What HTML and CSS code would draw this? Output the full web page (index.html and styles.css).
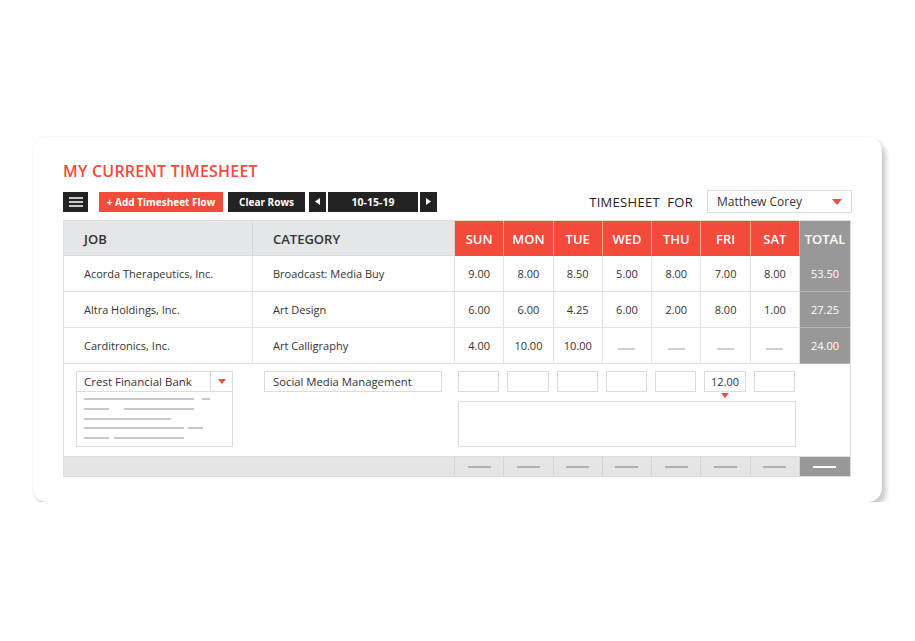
FILE: index.html
```html
<!DOCTYPE html>
<html>
<head>
<meta charset="utf-8">
<link rel="stylesheet" href="styles.css">
</head>
<body>
<div class="card">
  <h1 class="title">MY CURRENT TIMESHEET</h1>
  <div class="toolbar">
    <div class="tools">
      <div class="btn dark menu">
        <svg width="14" height="10" viewBox="0 0 14 10"><path d="M0 1h14M0 5h14M0 9h14" stroke="#fff" stroke-width="1.6"/></svg>
      </div>
      <div class="btn red add">+ Add Timesheet Flow</div>
      <div class="btn dark clear">Clear Rows</div>
      <div class="datepick">
        <div class="btn dark arrow"><svg width="5" height="7" viewBox="0 0 5 7"><path d="M5 0v7L0 3.5z" fill="#fff"/></svg></div>
        <div class="btn dark date">10-15-19</div>
        <div class="btn dark arrow"><svg width="5" height="7" viewBox="0 0 5 7"><path d="M0 0v7l5-3.5z" fill="#fff"/></svg></div>
      </div>
    </div>
    <div class="for">
      <span class="for-label">TIMESHEET&nbsp; FOR</span>
      <div class="select"><span>Matthew Corey</span><span class="tri"></span></div>
    </div>
  </div>

  <div class="sheet">
    <div class="row head">
      <div class="cell hl">JOB</div>
      <div class="cell hl">CATEGORY</div>
      <div class="cell hd">SUN</div>
      <div class="cell hd">MON</div>
      <div class="cell hd">TUE</div>
      <div class="cell hd">WED</div>
      <div class="cell hd">THU</div>
      <div class="cell hd">FRI</div>
      <div class="cell hd">SAT</div>
      <div class="cell ht">TOTAL</div>
    </div>
    <div class="row data">
      <div class="cell txt">Acorda Therapeutics, Inc.</div>
      <div class="cell txt">Broadcast: Media Buy</div>
      <div class="cell num">9.00</div>
      <div class="cell num">8.00</div>
      <div class="cell num">8.50</div>
      <div class="cell num">5.00</div>
      <div class="cell num">8.00</div>
      <div class="cell num">7.00</div>
      <div class="cell num">8.00</div>
      <div class="cell tot">53.50</div>
    </div>
    <div class="row data">
      <div class="cell txt">Altra Holdings, Inc.</div>
      <div class="cell txt">Art Design</div>
      <div class="cell num">6.00</div>
      <div class="cell num">6.00</div>
      <div class="cell num">4.25</div>
      <div class="cell num">6.00</div>
      <div class="cell num">2.00</div>
      <div class="cell num">8.00</div>
      <div class="cell num">1.00</div>
      <div class="cell tot">27.25</div>
    </div>
    <div class="row data">
      <div class="cell txt">Carditronics, Inc.</div>
      <div class="cell txt">Art Calligraphy</div>
      <div class="cell num">4.00</div>
      <div class="cell num">10.00</div>
      <div class="cell num">10.00</div>
      <div class="cell num"><span class="dash"></span></div>
      <div class="cell num"><span class="dash"></span></div>
      <div class="cell num"><span class="dash"></span></div>
      <div class="cell num"><span class="dash"></span></div>
      <div class="cell tot">24.00</div>
    </div>
    <div class="row entry">
      <div class="ecell job">
        <div class="combo"><span class="combo-text">Crest Financial Bank</span><span class="combo-btn"><span class="tri"></span></span></div>
        <div class="list">
          <svg width="156" height="54" viewBox="0 0 156 54">
            <g stroke="#c8c8c8" stroke-width="2">
              <path d="M7 7h110M125 7h8"/>
              <path d="M7 17h25M47 17h70"/>
              <path d="M7 27h87"/>
              <path d="M7 36h100M111 36h15"/>
              <path d="M7 46h25M37 46h70"/>
            </g>
          </svg>
        </div>
      </div>
      <div class="ecell cat">
        <div class="field">Social Media Management</div>
      </div>
      <div class="ecell days">
        <div class="box"></div>
        <div class="box"></div>
        <div class="box"></div>
        <div class="box"></div>
        <div class="box"></div>
        <div class="box filled">12.00<span class="pointer"></span></div>
        <div class="box"></div>
        <div class="note"></div>
      </div>
      <div class="ecell"></div>
    </div>
    <div class="row foot">
      <div class="fcell wide"></div>
      <div class="fcell"><span class="fdash"></span></div>
      <div class="fcell"><span class="fdash"></span></div>
      <div class="fcell"><span class="fdash"></span></div>
      <div class="fcell"><span class="fdash"></span></div>
      <div class="fcell"><span class="fdash"></span></div>
      <div class="fcell"><span class="fdash"></span></div>
      <div class="fcell"><span class="fdash"></span></div>
      <div class="fcell ftot"><span class="fdash"></span></div>
    </div>
  </div>
</div>
</body>
</html>
```
FILE: styles.css
```css
* { box-sizing: border-box; }
html, body { margin: 0; padding: 0; background: #fff; }
body {
  font-family: "Open Sans", "Noto Sans", "Liberation Sans", sans-serif;
  color: #333;
  padding: 137px 0 0 33px;
}
.card {
  width: 849px;
  height: 365px;
  background: #fff;
  border-radius: 14px;
  box-shadow: 0 0 3px rgba(0,0,0,0.08), 4px 5px 5px rgba(0,0,0,0.2);
  padding: 24px 30px 0 30px;
  display: flex;
  flex-direction: column;
}
.title {
  margin: 0 0 9px 0;
  font-size: 16px;
  line-height: 20px;
  font-weight: 600;
  color: #f24a3b;
  letter-spacing: 0.2px;
}
.toolbar {
  height: 23px;
  display: flex;
  align-items: center;
  justify-content: space-between;
}
.tools { display: flex; align-items: center; }
.btn {
  height: 20px;
  display: flex;
  align-items: center;
  justify-content: center;
  color: #fff;
  font-size: 10px;
  font-weight: 700;
  white-space: nowrap;
}
.dark { background: #232323; }
.red { background: #f24a3b; }
.menu { width: 25px; margin-right: 11px; }
.add { width: 124px; margin-right: 5px; }
.clear { width: 77px; margin-right: 4px; }
.datepick { display: flex; gap: 2px; }
.arrow { width: 17px; }
.date { width: 90px; font-size: 10.5px; }
.for { display: flex; align-items: center; }
.for-label {
  font-size: 13px;
  font-weight: 500;
  color: #222;
  margin-right: 14px;
  letter-spacing: 0.3px;
}
.select {
  width: 145px;
  height: 23px;
  border: 1px solid #dcdcdc;
  display: flex;
  align-items: center;
  justify-content: space-between;
  padding: 0 9px 0 9px;
  font-size: 12px;
  color: #333;
}
.tri {
  width: 0; height: 0;
  border-left: 5px solid transparent;
  border-right: 5px solid transparent;
  border-top: 6px solid #f24a3b;
}
.sheet {
  margin-top: 7px;
  width: 788px;
  border: 1px solid #dedede;
}
.row {
  display: grid;
  grid-template-columns: 189px 202px repeat(7, 1fr) 50px;
}
.cell {
  display: flex;
  align-items: center;
  border-right: 1px solid #e2e2e2;
  border-bottom: 1px solid #e2e2e2;
}
.cell:last-child { border-right: 0; }
.head { height: 35px; }
.head .cell { font-size: 13px; font-weight: 600; padding-top: 2px; }
.hl { background: #e5e6e8; color: #333; padding-left: 20px; border-right-color: #d6d6d6 !important; border-bottom-color: #dcdcdc !important; }
.hd { background: #f24a3b; color: #fff; justify-content: center; border-right-color: #f6a59c !important; border-bottom-color: #f24a3b !important; }
.ht { background: #999898; color: #fff; justify-content: center; border-bottom-color: #999898 !important; }
.data { height: 36px; }
.txt { padding-left: 20px; font-size: 11px; color: #333; }
.num { justify-content: center; font-size: 11px; color: #333; }
.tot { background: #999898; color: #fff; justify-content: center; font-size: 11px; border-bottom-color: #b5b5b5; }
.dash { width: 17px; height: 2px; background: #cfcfcf; margin-top: 6px; }
.entry { height: 93px; border-bottom: 1px solid #dedede; }
.ecell { padding-top: 7px; }
.job { padding-left: 12px; }
.combo {
  width: 157px; height: 21px;
  border: 1px solid #dcdcdc;
  display: flex;
  align-items: center;
  font-size: 11.5px;
  color: #333;
}
.combo-text { flex: 1; padding-left: 7px; }
.combo-btn {
  width: 22px; height: 100%;
  border-left: 1px solid #dcdcdc;
  display: flex; align-items: center; justify-content: center;
}
.combo-btn .tri { border-left-width: 4px; border-right-width: 4px; border-top-width: 5px; }
.list {
  width: 157px; height: 55px;
  border: 1px solid #dcdcdc;
  border-top: 0;
}
.list svg { display: block; }
.cat { padding-left: 11px; }
.field {
  width: 178px; height: 21px;
  border: 1px solid #dcdcdc;
  display: flex; align-items: center;
  padding-left: 8px;
  font-size: 11.3px;
  color: #333;
}
.days {
  grid-column: span 7;
  display: grid;
  grid-template-columns: repeat(7, 1fr);
  row-gap: 9px;
  align-content: start;
}
.box {
  height: 21px;
  margin: 0 5px 0 3px;
  border: 1px solid #dcdcdc;
  position: relative;
  display: flex; align-items: center; justify-content: center;
  font-size: 11px;
  color: #333;
}
.pointer {
  position: absolute;
  left: 50%; top: 21px;
  margin-left: -4px;
  width: 0; height: 0;
  border-left: 4px solid transparent;
  border-right: 4px solid transparent;
  border-top: 5px solid #f24a3b;
}
.note {
  grid-column: 1 / -1;
  height: 46px;
  margin: 0 4px 0 3px;
  border: 1px solid #dcdcdc;
}
.foot { height: 19px; background: #e4e5e7; }
.fcell {
  display: flex; align-items: center; justify-content: center;
  border-right: 1px solid #d4d4d4;
}
.fcell.wide { grid-column: span 2; }
.fcell:last-child { border-right: 0; }
.fdash { width: 23px; height: 2px; background: #b0b0b0; }
.ftot { background: #999898; }
.ftot .fdash { background: #fff; height: 2px; }
```
